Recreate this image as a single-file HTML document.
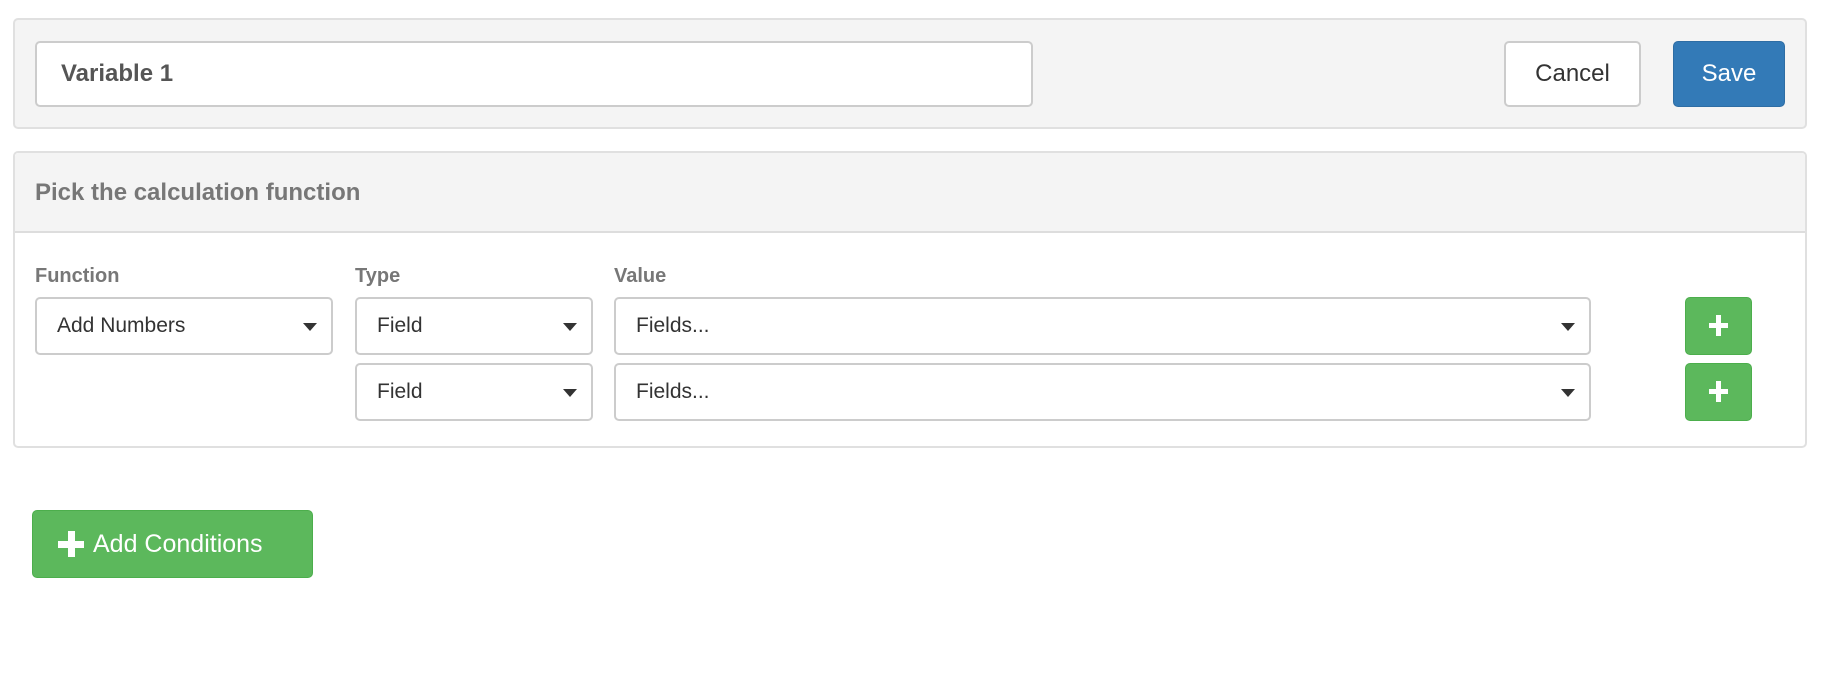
<!DOCTYPE html>
<html><head><meta charset="utf-8"><style>
*{box-sizing:border-box;margin:0;padding:0}
body{width:1826px;height:676px;background:#fff;font-family:"Liberation Sans",Arial,sans-serif;position:relative;overflow:hidden}
.abs{position:absolute}
.panel{position:absolute;border:2px solid #e0e0e0;border-radius:5px}
.inp{position:absolute;background:#fff;border:2px solid #ccc;border-radius:5px;color:#333;font-size:21px;display:flex;align-items:center;padding-left:20px}
.caret{position:absolute;right:14px;top:50%;margin-top:-3px;width:0;height:0;border-left:7px solid transparent;border-right:7px solid transparent;border-top:8px solid #333}
.lbl{position:absolute;font-weight:bold;color:#777;font-size:20px}
.btn{position:absolute;border-radius:5px;display:flex;align-items:center;justify-content:center;font-size:24px}
.plus{position:absolute;background:#5cb85c;border:1px solid #4cae4c;border-radius:5px}
</style></head><body>
<div class="panel" style="left:13px;top:18px;width:1794px;height:111px;background:#f4f4f4"></div>
<div class="inp" style="left:35px;top:41px;width:998px;height:66px;font-weight:bold;font-size:24px;color:#555;padding-left:24px">Variable 1</div>
<div class="btn" style="left:1504px;top:41px;width:137px;height:66px;background:#fff;border:2px solid #ccc;color:#333">Cancel</div>
<div class="btn" style="left:1673px;top:41px;width:112px;height:66px;background:#337ab7;border:1px solid #2e6da4;color:#fff">Save</div>

<div class="panel" style="left:13px;top:151px;width:1794px;height:297px;background:#fff"></div>
<div class="abs" style="left:15px;top:153px;width:1790px;height:80px;background:#f4f4f4;border-bottom:2px solid #ddd;border-radius:4px 4px 0 0"></div>
<div class="abs" style="left:35px;top:179px;font-weight:bold;font-size:24px;color:#777">Pick the calculation function</div>

<div class="lbl" style="left:35px;top:265px">Function</div>
<div class="lbl" style="left:355px;top:265px">Type</div>
<div class="lbl" style="left:614px;top:265px">Value</div>

<div class="inp" style="left:35px;top:297px;width:298px;height:58px">Add Numbers<span class="caret"></span></div>
<div class="inp" style="left:355px;top:297px;width:238px;height:58px">Field<span class="caret"></span></div>
<div class="inp" style="left:614px;top:297px;width:977px;height:58px">Fields...<span class="caret"></span></div>
<div class="inp" style="left:355px;top:363px;width:238px;height:58px">Field<span class="caret"></span></div>
<div class="inp" style="left:614px;top:363px;width:977px;height:58px">Fields...<span class="caret"></span></div>

<div class="plus" style="left:1685px;top:297px;width:67px;height:58px"><svg width="67" height="58" style="position:absolute;left:-1px;top:-1px"><rect x="31" y="18" width="5" height="21" fill="#fff"/><rect x="24" y="26" width="19" height="5" fill="#fff"/></svg></div>
<div class="plus" style="left:1685px;top:363px;width:67px;height:58px"><svg width="67" height="58" style="position:absolute;left:-1px;top:-1px"><rect x="31" y="18" width="5" height="21" fill="#fff"/><rect x="24" y="26" width="19" height="5" fill="#fff"/></svg></div>

<div class="btn" style="left:32px;top:510px;width:281px;height:68px;background:#5cb85c;border:1px solid #4cae4c;color:#fff;justify-content:flex-start;padding-left:25px;font-size:25px">
<svg width="26" height="26" style="margin-right:9px"><rect x="10" y="0" width="7" height="26" fill="#fff"/><rect x="0" y="10" width="26" height="7" fill="#fff"/></svg>Add Conditions</div>
</body></html>
